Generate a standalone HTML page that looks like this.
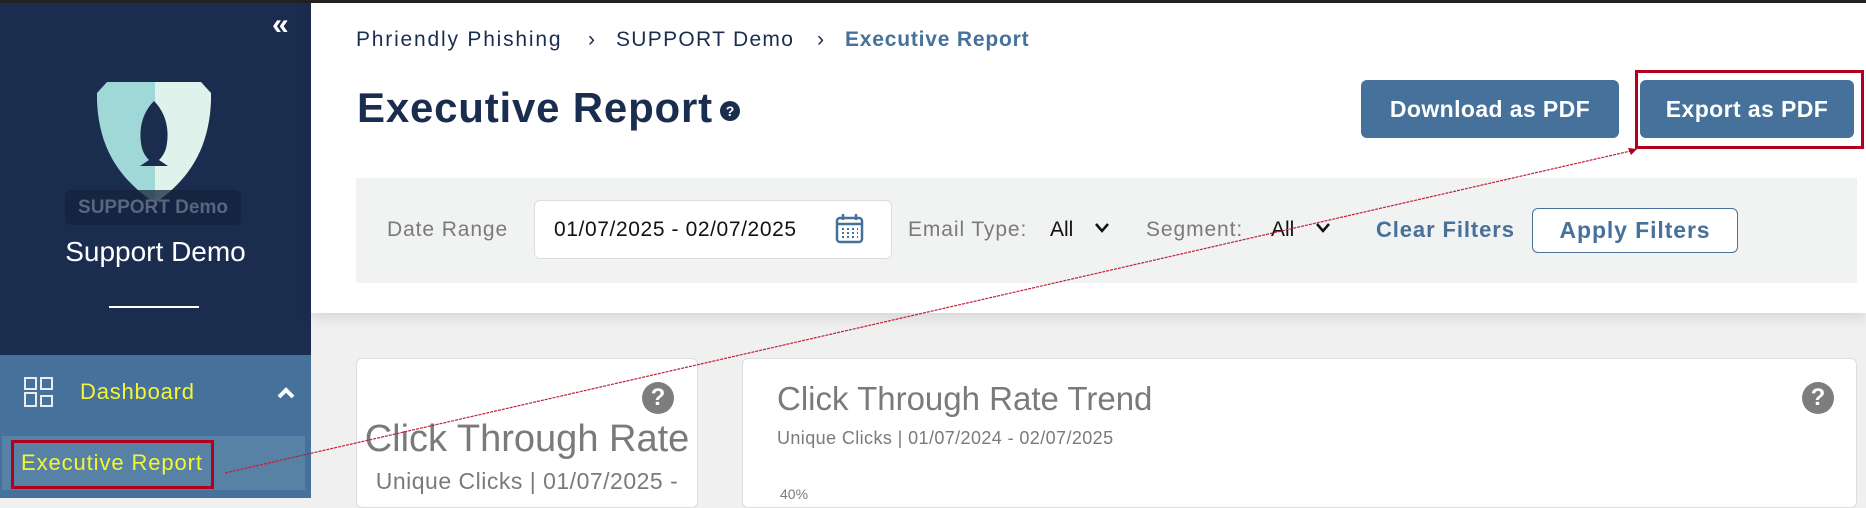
<!DOCTYPE html>
<html><head><meta charset="utf-8">
<style>
*{margin:0;padding:0;box-sizing:border-box}
body{width:1866px;height:498px;overflow:hidden;background:#f0f0f0;font-family:"Liberation Sans",sans-serif;position:relative}
.abs{position:absolute;white-space:nowrap}
#top{left:0;top:0;width:1866px;height:3px;background:#222}
#side{left:0;top:3px;width:311px;height:495px;background:#1b2d4f}
#header{left:311px;top:3px;width:1555px;height:310px;background:#fff;box-shadow:0 4px 14px rgba(0,0,0,.12)}
.btn{background:#46719a;color:#fff;font-size:23px;font-weight:bold;border-radius:6px;display:flex;align-items:center;justify-content:center;letter-spacing:0.4px}
.lbl{font-size:21px;color:#7a7a7a;letter-spacing:0.9px}
.card{background:#fff;border:1px solid #ddd;border-radius:6px}
.q{width:32px;height:32px;border-radius:50%;background:#7d7d7d;color:#fff;font-weight:bold;font-size:24px;text-align:center;line-height:32px}
.bc{font-size:21px;color:#1b2d4f;top:28px;letter-spacing:1.3px}
</style></head><body>
<div class="abs" id="top"></div>
<div class="abs" id="side"></div>
<div class="abs" style="left:272px;top:8px;color:#fff;font-size:30px;font-weight:bold">«</div>
<svg class="abs" style="left:97px;top:81px" width="116" height="124" viewBox="0 0 116 124">
<path d="M10 1 L58 1 L58 122 C25 100 2 70 0 20 L0 12 Z" fill="#a0d8d8"/>
<path d="M58 1 L104 1 L114 12 L114 20 C112 70 90 100 58 122 Z" fill="#dff3ec"/>
<path d="M57 20 C45 32 42 48 44 62 C45 71 49 76 52 79 L43 85 L71 85 L62 79 C65 76 69 71 70 62 C72 48 69 32 57 20 Z" fill="#1b2d4f"/>
</svg>
<div class="abs" style="left:65px;top:190px;width:176px;height:35px;background:rgba(20,35,60,.75);border-radius:6px;color:#56677f;font-size:19px;font-weight:bold;text-align:center;line-height:35px">SUPPORT Demo</div>
<div class="abs" style="left:0;top:236px;width:311px;text-align:center;color:#fff;font-size:28px">Support Demo</div>
<div class="abs" style="left:109px;top:306px;width:90px;height:2px;background:#fff"></div>
<div class="abs" style="left:0;top:355px;width:311px;height:143px;background:#46719a"></div>
<svg class="abs" style="left:24px;top:377px" width="30" height="30" viewBox="0 0 30 30" fill="none" stroke="#e8eef4" stroke-width="2"><rect x="1" y="1" width="11" height="11"/><rect x="17" y="1" width="11" height="11"/><rect x="1" y="16" width="11" height="13"/><rect x="17" y="19" width="11" height="10"/></svg>
<div class="abs" style="left:80px;top:379px;color:#f5f535;font-size:22px;letter-spacing:0.8px">Dashboard</div>
<svg class="abs" style="left:276px;top:386px" width="20" height="14" viewBox="0 0 20 14"><path d="M3 11 L10 4 L17 11" stroke="#fff" stroke-width="4" fill="none"/></svg>
<div class="abs" style="left:2px;top:436px;width:303px;height:54px;background:#5782a5"></div>
<div class="abs" style="left:11px;top:440px;width:203px;height:49px;border:3px solid #b0001e"></div>
<div class="abs" style="left:21px;top:450px;color:#f5f535;font-size:22px;letter-spacing:0.9px">Executive Report</div>
<div class="abs" id="header"></div>
<div class="abs bc" style="left:356px;letter-spacing:1.8px">Phriendly Phishing</div>
<div class="abs bc" style="left:588px">›</div>
<div class="abs bc" style="left:616px">SUPPORT Demo</div>
<div class="abs bc" style="left:817px">›</div>
<div class="abs bc" style="left:845px;color:#46719a;font-weight:bold;letter-spacing:0.8px">Executive Report</div>
<div class="abs" style="left:357px;top:84px;font-size:42px;font-weight:bold;color:#1b2d4f;letter-spacing:0.8px">Executive Report</div>
<div class="abs" style="left:720px;top:101px;width:20px;height:20px;border-radius:50%;background:#1b2d4f;color:#fff;font-size:14px;font-weight:bold;text-align:center;line-height:20px">?</div>
<div class="abs btn" style="left:1361px;top:80px;width:258px;height:58px">Download as PDF</div>
<div class="abs btn" style="left:1640px;top:80px;width:214px;height:58px">Export as PDF</div>
<div class="abs" style="left:1635px;top:70px;width:229px;height:79px;border:3px solid #b0001e"></div>
<div class="abs" style="left:356px;top:178px;width:1501px;height:105px;background:#f1f2f2"></div>
<div class="abs lbl" style="left:387px;top:218px">Date Range</div>
<div class="abs" style="left:534px;top:200px;width:358px;height:59px;background:#fff;border:1px solid #ddd;border-radius:6px"></div>
<div class="abs" style="left:554px;top:218px;font-size:21px;color:#111;letter-spacing:0.6px">01/07/2025 - 02/07/2025</div>
<svg class="abs" style="left:835px;top:213px" width="29" height="31" viewBox="0 0 29 31" fill="none" stroke="#46719a" stroke-width="2.5"><rect x="2" y="5" width="25" height="24" rx="3"/><path d="M2 11 H27 M8 1 V7 M21 1 V7"/><path d="M7 16h2M12 16h2M17 16h2M22 16h1M7 20h2M12 20h2M17 20h2M22 20h1M7 24h2M12 24h2M17 24h2M22 24h1" stroke-width="2"/></svg>
<div class="abs lbl" style="left:908px;top:218px">Email Type:</div>
<div class="abs" style="left:1050px;top:218px;font-size:21px;color:#111">All</div>
<svg class="abs" style="left:1094px;top:222px" width="16" height="12" viewBox="0 0 16 12"><path d="M2 2 L8 9 L14 2" stroke="#111" stroke-width="2.5" fill="none"/></svg>
<div class="abs lbl" style="left:1146px;top:218px">Segment:</div>
<div class="abs" style="left:1271px;top:218px;font-size:21px;color:#111">All</div>
<svg class="abs" style="left:1315px;top:222px" width="16" height="12" viewBox="0 0 16 12"><path d="M2 2 L8 9 L14 2" stroke="#111" stroke-width="2.5" fill="none"/></svg>
<div class="abs" style="left:1376px;top:217px;font-size:22px;font-weight:bold;color:#46719a;letter-spacing:0.9px">Clear Filters</div>
<div class="abs" style="left:1532px;top:208px;width:206px;height:45px;border:1.5px solid #46719a;border-radius:6px;background:#fff;color:#46719a;font-size:23px;font-weight:bold;text-align:center;line-height:42px;letter-spacing:0.9px">Apply Filters</div>
<div class="abs card" style="left:356px;top:358px;width:342px;height:150px"></div>
<div class="abs q" style="left:642px;top:382px">?</div>
<div class="abs" style="left:340px;top:418px;width:374px;text-align:center;font-size:38px;color:#7a7a7a">Click Through Rate</div>
<div class="abs" style="left:340px;top:468px;width:374px;text-align:center;font-size:23px;color:#7a7a7a;letter-spacing:0.5px">Unique Clicks | 01/07/2025 -</div>
<div class="abs card" style="left:742px;top:358px;width:1115px;height:150px"></div>
<div class="abs q" style="left:1802px;top:382px">?</div>
<div class="abs" style="left:777px;top:380px;font-size:33px;color:#7a7a7a">Click Through Rate Trend</div>
<div class="abs" style="left:777px;top:428px;font-size:18px;color:#7a7a7a;letter-spacing:0.4px">Unique Clicks | 01/07/2024 - 02/07/2025</div>
<div class="abs" style="left:780px;top:486px;font-size:14px;color:#7a7a7a">40%</div>
<svg class="abs" style="left:0;top:0" width="1866" height="498"><line x1="225" y1="473" x2="1635" y2="150" stroke="#c0203a" stroke-width="1.2" stroke-dasharray="3 1"/><path d="M1637 149 L1628 148 L1631 155 Z" fill="#b0001e"/></svg>
</body></html>
